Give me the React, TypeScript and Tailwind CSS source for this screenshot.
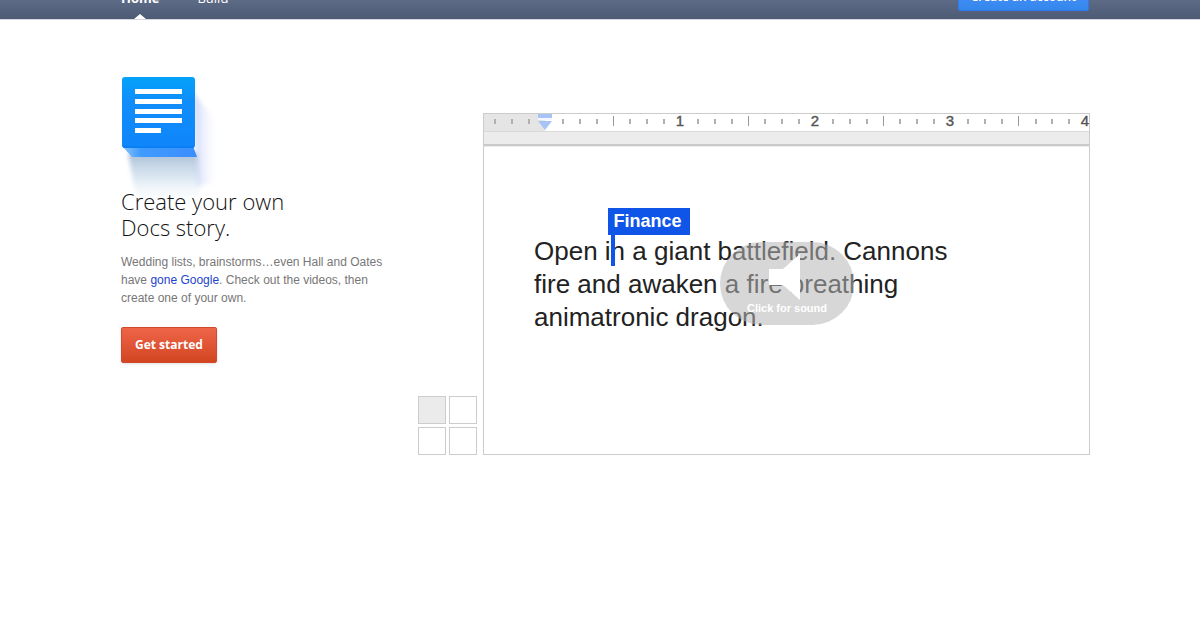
const SANS = 'font-["Liberation_Sans",Arial,sans-serif]';
const OPEN = 'font-["Open_Sans",sans-serif]';

/* ─── Ruler ─── */
const EIGHTH = 16.88;
const ORIGIN = 61;
const TICKS = Array.from({ length: 36 }, (_, i) => i - 3);

const Ruler = () => (
    <svg className="block h-[33px] w-full" aria-hidden="true">
        <rect width="100%" height="17" fill="#fff" />
        <rect width={ORIGIN} height="17" fill="#e5e5e5" />
        {TICKS.map((k) => {
            const x = Math.round(ORIGIN + k * EIGHTH);
            if (k > 0 && k % 8 === 0) {
                return (
                    <text
                        key={k}
                        x={x}
                        y="12"
                        textAnchor="middle"
                        className='font-["Liberation_Sans",Arial,sans-serif]'
                        fontSize="15"
                        fill="#555"
                        stroke="#555"
                        strokeWidth="0.4"
                    >
                        {k / 8}
                    </text>
                );
            }
            if (k === 0) return null;
            const half = k > 0 && k % 4 === 0;
            return (
                <rect
                    key={k}
                    x={x}
                    y={half ? 2 : 5}
                    width={half ? 1 : 2}
                    height={half ? 10 : 5}
                    fill={half ? '#999' : '#b0b0b0'}
                />
            );
        })}
        <rect x="54" y="0" width="14" height="4" fill="#a8c3f5" />
        <rect x="54" y="4" width="14" height="2" fill="#f4f7fd" />
        <path d="M54 7h14l-7 9z" fill="#a8c3f5" />
        <rect y="17" width="100%" height="1" fill="#d9d9d9" />
        <rect y="18" width="100%" height="12" fill="#ececec" />
        <rect y="30" width="100%" height="2" fill="#cacaca" />
        <rect y="32" width="100%" height="1" fill="#ececec" />
    </svg>
);

const DocsLogo = () => (
    <svg width="110" height="135" viewBox="0 0 110 135" className="block" role="img" aria-label="Docs">
        <defs>
            <linearGradient id="face" x1="0" y1="0" x2="0" y2="1">
                <stop offset="0" stopColor="#04a2f9" />
                <stop offset="0.35" stopColor="#108dfb" />
                <stop offset="1" stopColor="#0f86fb" />
            </linearGradient>
            <linearGradient id="base" x1="0" y1="0" x2="1" y2="0">
                <stop offset="0" stopColor="#8cc4fb" />
                <stop offset="0.25" stopColor="#3f9bfd" />
                <stop offset="1" stopColor="#3b8dff" />
            </linearGradient>
            <linearGradient id="below" x1="0" y1="0" x2="0" y2="1">
                <stop offset="0" stopColor="#9fb6d0" stopOpacity="0.9" />
                <stop offset="0.5" stopColor="#c5d9ea" stopOpacity="0.6" />
                <stop offset="1" stopColor="#eef6fb" stopOpacity="0" />
            </linearGradient>
            <linearGradient id="side" x1="0" y1="0" x2="1" y2="0">
                <stop offset="0" stopColor="#c3cff9" stopOpacity="0.9" />
                <stop offset="1" stopColor="#fff" stopOpacity="0" />
            </linearGradient>
            <filter id="soft" x="-20%" y="-20%" width="140%" height="140%">
                <feGaussianBlur stdDeviation="2" />
            </filter>
        </defs>
        <path d="M72 16l26 34 0 56-22 4z" fill="url(#side)" filter="url(#soft)" />
        <path d="M7 77h69l4 50H16z" fill="url(#below)" filter="url(#soft)" />
        <path d="M1 70l10 11h65l-4-11z" fill="url(#base)" />
        <rect x="1" y="1" width="73" height="71" rx="3" fill="url(#face)" />
        <path d="M2 71h71" stroke="#0877ec" />
        <g fill="#fff">
            <rect x="14" y="13" width="47" height="5" />
            <rect x="14" y="23" width="47" height="5" />
            <rect x="14" y="33" width="47" height="5" />
            <rect x="14" y="42" width="47" height="5" />
            <rect x="14" y="52" width="26" height="5" />
        </g>
    </svg>
);

/* ─── Story picker ─── */
const STORIES = ['Story 1', 'Story 2', 'Story 3', 'Story 4'];

const StoryPicker = () => (
    <div className="grid grid-cols-2 gap-[3px]">
        {STORIES.map((story, i) => (
            <button
                key={story}
                aria-label={story}
                className={`size-7 border border-[#ccc] ${i === 0 ? 'bg-[#ebebeb]' : 'bg-white'}`}
            />
        ))}
    </div>
);

const Header = () => (
    <header className="h-5 border-b border-[#d5d8de] bg-linear-to-b from-[#5d6b87] to-[#4d5a74]">
        <div className="mx-auto flex h-full max-w-[980px] items-end justify-between overflow-hidden pr-px pl-[11px]">
            <nav className={`flex gap-[38px] text-[13px] leading-5 text-white ${OPEN}`}>
                <a href="#home" className="flex flex-col items-center font-bold">
                    Home
                    <svg width="12" height="5" viewBox="0 0 12 5" className="mt-[6px] block" aria-hidden="true">
                        <path d="M0 5l6-5 6 5z" fill="#fff" />
                    </svg>
                </a>
                <a href="#build">Build</a>
            </nav>
            <button
                className={`mb-2 h-7 shrink-0 rounded-xs border border-[#3079ed] bg-linear-to-b from-[#4d90fe] to-[#3388ec] px-3 text-[12px] leading-6 font-semibold text-white ${OPEN}`}
            >
                Create an account
            </button>
        </div>
    </header>
);

const App = () => {
    return (
        <div className={`min-h-screen bg-white ${SANS}`}>
            <Header />
            <main className="mx-auto flex max-w-[980px] items-start pt-14 pl-[11px]">
                {/* Intro */}
                <section className="w-[297px] shrink-0">
                    <div className="h-28">
                        <DocsLogo />
                    </div>
                    <h1 className={`relative text-[22px] leading-[26px] font-light text-[#111] ${OPEN}`}>
                        Create your own
                        <br />
                        Docs story.
                    </h1>
                    <p className="mt-[13px] w-[264px] text-[12px] leading-[18px] text-[#777]">
                        Wedding lists, brainstorms…even Hall and Oates have{' '}
                        <a href="#gone-google" className="text-[#2244cc]">gone Google</a>. Check out the videos, then
                        create one of your own.
                    </p>
                    <button
                        className={`mt-5 h-9 rounded-xs border border-[#d14a2b] bg-linear-to-b from-[#ee6548] to-[#d2451f] px-[13px] text-[12px] font-bold text-white shadow-sm ${OPEN}`}
                    >
                        Get started
                    </button>
                </section>

                {/* Story stage */}
                <section className="mt-[37px] flex min-w-0 flex-1 items-end gap-[6px]">
                    <StoryPicker />
                    <div className="relative min-w-0 flex-1 border border-[#ccc]">
                        <Ruler />
                        <div className="h-[307px] px-[50px] pt-[88px]">
                            <p className="text-[26px] leading-[33px] text-[#222]">
                                Open i
                                <span className="relative">
                                    <span className="absolute bottom-0 left-0 h-8 w-1 bg-[#0f55e8]" />
                                    <span className="absolute bottom-[31px] left-[-3px] bg-[#0f55e8] pr-2 pl-[6px] text-[18px] leading-[27px] font-bold text-white">
                                        Finance
                                    </span>
                                </span>
                                n a giant battlefield. Cannons
                                <br />
                                fire and awaken a fire breathing
                                <br />
                                animatronic dragon.
                            </p>
                        </div>
                        <button className="absolute top-[128px] left-[236px] flex h-[83px] w-[134px] flex-col items-center rounded-full bg-[#b7b7b7]/55 pt-3 text-[11px] leading-4 font-bold text-white">
                            <svg width="31" height="46" viewBox="0 0 31 46" className="mr-[6px] block" aria-hidden="true">
                                <path d="M0 15h14L31 0v46L14 31H0z" fill="#fff" />
                            </svg>
                            Click for sound
                        </button>
                    </div>
                </section>
            </main>
        </div>
    );
};

export default App;
